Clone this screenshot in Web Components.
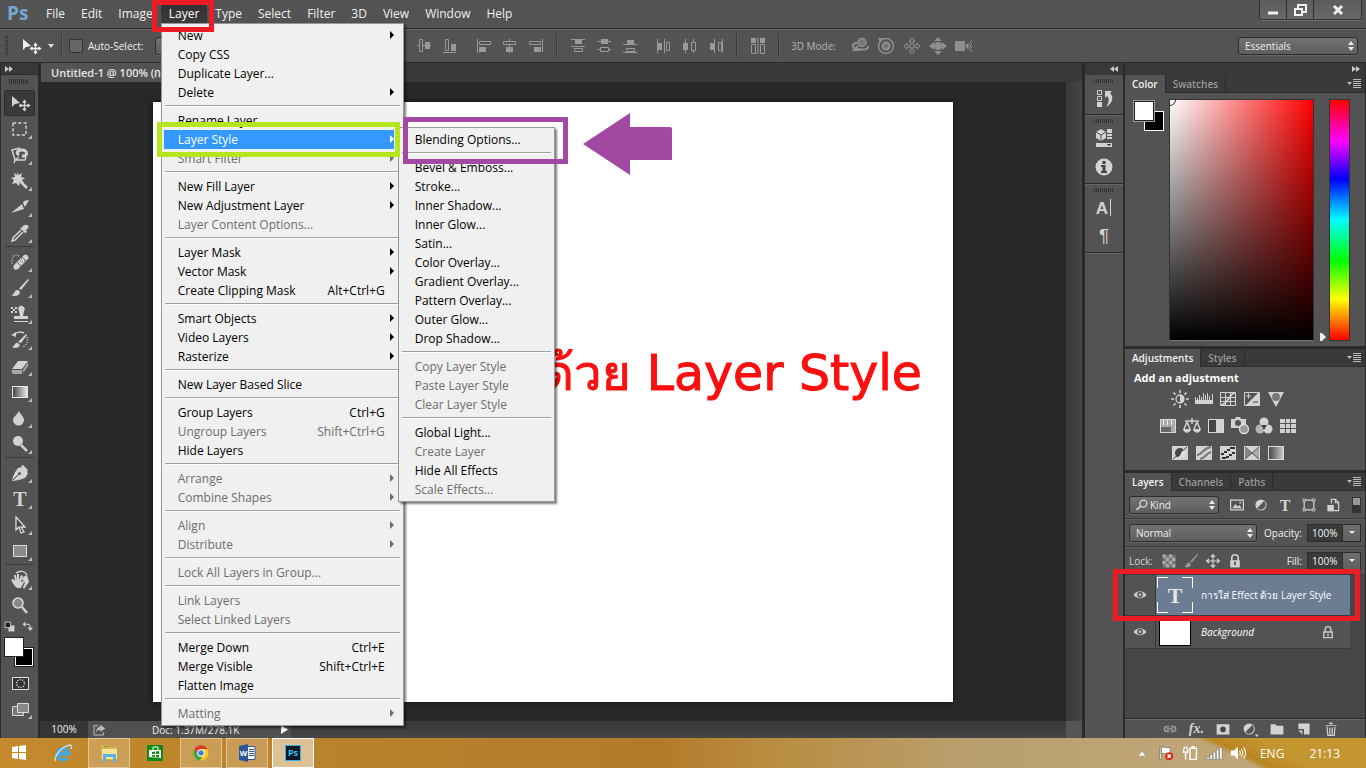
<!DOCTYPE html>
<html lang="en">
<head>
<meta charset="utf-8">
<meta name="viewport" content="width=device-width, initial-scale=1">
<title>Untitled-1</title>
<style>
    html, body {
        margin: 0;
        height: 100%;
    }

    body {
        background: #282828;
        color: #e6e6e6;
        font-family: "Open Sans", "Noto Sans", "DejaVu Sans", sans-serif;
        font-size: 10px;
        overflow: hidden;
    }
</style>
</head>
<body>
<ps-desktop>
    <ps-menubar slot="menubar"></ps-menubar>
    <ps-options-bar slot="options"></ps-options-bar>
    <ps-toolbox slot="work"></ps-toolbox>
    <ps-document slot="work"></ps-document>
    <ps-dock slot="work"></ps-dock>
    <ps-taskbar slot="taskbar"></ps-taskbar>
</ps-desktop>

<script>
// Icon artwork, drawn on a 20x20 grid
const ALIGN = {
    // one filled box and one outlined box around a horizontal guide
    mid: '<path d="M3 9.5h14"/><path d="M5.5 3.5h3v12h-3z" fill="#535353"/><path class="f" d="M11 6h5v7h-5z"/>',
    end: '<path d="M3 16.500h13M5.500 3.500h3v11h-3z"/><path class="f" d="M11 8h5v7h-5z"/>',
    start: '<path d="M3 3.500h14M5.500 5.500h3v11h-3z"/><path class="f" d="M11 5h5v7h-5z"/>',
    dTop: '<path d="M3 3.500h14M3 10.500h14M6.500 12.500h8v3h-8z"/><path class="f" d="M7 4h7v4H7z"/>',
    dMid: '<path d="M3 5.500h14M3 13.500h14"/><path class="f" d="M7 3h7v5H7z"/><path d="M6.500 11.500h8v4h-8z" fill="#535353"/>',
    dEnd: '<path d="M3 8.500h14M3 16.500h14M6.500 12.500h8v3h-8z"/><path class="f" d="M7 4h7v4H7z"/>'
};
const flip = (art) => `<g transform="matrix(0 1 1 0 0 0)">${art}</g>`;
const line = (art) => `<g class="s">${art}</g>`;

const ICONS = {
    alignMid: line(ALIGN.mid),
    alignEnd: line(ALIGN.end),
    alignLeft: line(flip(ALIGN.start)),
    alignCenter: line(flip(ALIGN.mid)),
    alignRight: line(flip(ALIGN.end)),
    distTop: line(ALIGN.dTop),
    distMid: line(ALIGN.dMid),
    distEnd: line(ALIGN.dEnd),
    distLeft: line(flip(ALIGN.dTop)),
    distCenter: line(flip(ALIGN.dMid)),
    distRight: line(flip(ALIGN.dEnd)),
    autoAlign: line('<path class="f" d="M3 2h5v5H3zM12 2h5v5h-5z"/><path d="M3.500 8.500h4v9h-4zM12.500 8.500h4v9h-4zM10 2v16"/>'),
    roll3d: '<circle cx="12" cy="6.500" r="4" fill="#777" stroke="currentColor" stroke-width="1.500"/><path class="l" stroke-width="2" d="M7 7C2 7 1 12 7 13c6 1 12 1 11-3M8 10l-4 4h6"/>',
    orbit3d: '<circle cx="10" cy="10" r="7.500" class="l" stroke-width="1.500"/><circle cx="10" cy="10" r="4.500"/><circle cx="10" cy="10" r="2.500" fill="#777"/><path d="M2 2l6 0-4 5z"/>',
    pan3d: '<path class="l" d="M10 2l3 3h-2v4h4V7l3 3-3 3v-2h-4v4h2l-3 3-3-3h2v-4H5v2l-3-3 3-3v2h4V5H7z"/>',
    slide3d: '<circle cx="10" cy="10" r="4"/><path d="M10 1l4 4H6zM10 19l4-4H6zM1 10l5-4v8zM19 10l-5-4v8z"/>',
    zoom3d: '<path d="M1 5h10v10H1zM11 10l3-3v6z"/><path class="l" d="M18 4l-4 6 4 6M18 8l-2 2 2 2"/>',

    move: '<path d="M2 3v11l3-3 5-1z"/><path class="l" stroke-width="1.300" d="M14.500 8v9M10 12.500h9M13 9.500l1.500-2 1.500 2M13 15.500l1.500 2 1.500-2M11.500 11l-2 1.500 2 1.500M17.500 11l2 1.500-2 1.500"/>',
    marquee: '<rect x="3" y="4" width="13" height="12" class="l" stroke-width="1.500" stroke-dasharray="3.200 2"/>',
    lasso: '<path class="l" stroke-width="1.500" d="M10 3L2 5l3 10 4-3M5 15l10 0 1-3M5 15l-1 3"/><path class="l" stroke-width="3" d="M9 10c-3-2-2-5 3-5 6 0 6 7 0 6"/>',
    wand: '<path d="M7 1l1.500 3L12 2l-1 4 4 1-3 2 2 3-4-1-1 4-3-3-4 1 2-4-3-2 4-1-1-4 3 2z"/><path class="l" stroke-width="2.500" d="M11 11l6 6"/>',
    slice: '<path d="M1 16L12 7l2 5z"/><path d="M13 6l1-2 5-1-4 7z"/>',
    dropper: '<path d="M11 6c0-1 3-5 6-4s1 4-1 5l1 2-2 1-5-5 1-1z"/><path class="l" stroke-width="1.500" d="M11 7l-8 8-1 3 3-1 8-8"/>',
    heal: '<path d="M4 13L14 3c2-2 6 2 4 4L8 17c-3 2-6-1-4-4z"/><path stroke="#666" stroke-width="1" d="M7 10l4 4M12 5l4 4M10 9h1M12 10h1M11 7h1M14 9h1"/><path class="l" stroke-width="1.300" stroke-dasharray="1 1.500" d="M9 4c-5-3-9 3-6 9"/>',
    brush: '<path d="M18 1l1 1-8 10-2-1.500z"/><path d="M1 17c4 0 3-6 7-5l2 2c0 4-6 5-9 3z"/>',
    stamp: '<path d="M12 2a3 3 0 0 1 2 5l-1 5h5v3H4v-3h6l-1-5a3 3 0 0 1 3-5zM4 17h14v1H4zM1 3h2v2H1zM5 3h2v2H5zM3 5h2v2H3zM1 7h2v2H1zM5 7h2v2H5z"/>',
    history: '<path d="M16 4l1 1-6 8-3-1zM2 17c3-1 3-5 6-4l2 2c-1 3-5 4-8 2zM1 5l5-3v5z"/><path class="l" stroke-width="1.500" d="M4 5c3-4 8-3 10-2"/><path class="l" stroke-width="1.500" stroke-dasharray="1 1.500" d="M17 7c2 5-2 10-5 10"/>',
    eraser: '<path d="M2 13l6-8h10l-6 8z"/><path d="M2 14h10v4H4c-2 0-3-2-2-4zM13 14l5-8v4l-5 7z" fill="#a8a8a8"/>',
    gradient: '<linearGradient id="g"><stop stop-color="#444"/><stop offset="1" stop-color="#eee"/></linearGradient><rect x="2.500" y="4.500" width="15" height="11" fill="url(#g)" stroke="#e6e6e6"/>',
    blur: '<path d="M9 3c2 4 5 6 5 9a5 5 0 0 1-11 0c0-3 4-5 6-9z"/>',
    dodge: '<circle cx="8" cy="7" r="5"/><path class="l" stroke-width="2.500" d="M11 11l6 6"/>',
    pen: '<path d="M12 4l6 6-2 4c-4 3-8 3-14 4 1-6 3-9 6-13zM13 2l5 5-1 2-6-6z"/><path stroke="#444" d="M3 17l6-6"/><circle cx="9.500" cy="10.500" r="1.300" fill="#444"/>',
    type: '<text x="10" y="17" text-anchor="middle" font-family="Liberation Serif, serif" font-weight="bold" font-size="20">T</text>',
    arrow: '<path d="M6 2v13l3-3 2 6 3-1-3-5h4z" fill="#444" stroke="#dcdcdc" stroke-width="1.300"/>',
    shape: '<rect x="3.500" y="4.500" width="13" height="11" fill="#8c8c8c" stroke="#dcdcdc"/>',
    hand: '<path d="M7 18c-3-2-4-5-6-8l2-1 2 2-1-6h2l1 5V4h2v6l2-5 2 1-2 6 3-1c0 3-3 5-3 7z"/><path d="M13 7l4-2 2 7-5 7-1-2 2-4-3-4z"/><path class="l" stroke-width="1.500" d="M6 3c4-3 9-2 11 2"/>',
    zoom: '<circle cx="8" cy="7" r="5" fill="#888" stroke="#dcdcdc" stroke-width="1.500"/><path class="l" stroke-width="2.500" d="M12 11l5 6"/>',
    mask: '<path fill="#333" stroke="#e0e0e0" d="M2.500 4.500h16v12h-16z"/><circle cx="10.500" cy="10.500" r="4" class="l" stroke-width="1.500" stroke-dasharray="1.200 1.300"/>',
    screens: '<path fill="#777" stroke="#dcdcdc" d="M2.500 7.500h11v9h-11z"/><path fill="#888" stroke="#dcdcdc" d="M7.500 4.500h11v9h-11z"/>',
    swap: '<path class="l" stroke-width="2" d="M4 6h6q5 0 5 6"/><path d="M6 1v10L1 6zM10 12h10l-5 6z"/>',
    defaults: '<path d="M8 8h11v11H8z"/><path fill="#222" stroke="#dcdcdc" stroke-width="1.500" d="M2 2h10v10H2z"/>',

    actions: '<path class="l" d="M3.500 2.500h4v4h-4zM3.500 8.500h4v4h-4z"/><path d="M3 14h5v5H3zM11 3h7l-2 2c4 4 3 10-4 14 4-6 3-9 1-11l-2 2z"/>',
    props: '<path d="M7 1l5 3v6l-5 3-5-3V4zM13 1h5v4h-5zM13 6h5v2h-5zM13 9h5v2h-5zM2 15h16v4H2z"/><path fill="none" stroke="#555" d="M2 4l5 3 5-3M7 7v6"/><path fill="#222" d="M13 16h4l-2 2z"/>',
    info: '<circle cx="10" cy="10" r="8.500"/><path fill="#444" d="M8.500 4h3v3h-3zM7 8h4.500v6H13v2H7v-2h1.500v-4H7z"/>',
    char: '<text x="8" y="17" text-anchor="middle" font-family="Liberation Sans, sans-serif" font-weight="bold" font-size="17">A</text><path d="M16 2h1v17h-1z"/>',
    para: '<text x="10" y="16" text-anchor="middle" font-family="Liberation Sans, sans-serif" font-size="19">¶</text>',

    bright: '<circle cx="10" cy="10" r="4" class="l" stroke-width="1.300"/><path d="M10 6a4 4 0 0 1 0 8z"/><path class="l" stroke-width="1.700" d="M10 1v3M10 16v3M1 10h3M16 10h3M3.500 3.500l2 2M14.500 14.500l2 2M16.500 3.500l-2 2M3.500 16.500l2-2"/>',
    levels: '<path d="M1 11h18v4H1z"/><path class="l" d="M1.500 8v4M3.500 9v3M5.500 6v6M7.500 8v4M9.500 4v8M11.500 6v6M13.500 4v8M15.500 7v5M18.500 5v7"/>',
    curves: '<path class="l" d="M2.500 3.500h15v13h-15zM7.500 4v12M12.500 4v12M3 8.500h14M3 12.500h14"/><path class="l" stroke-width="1.700" d="M3 16c8-1 7-11 14-12"/>',
    exposure: '<path class="l" d="M2.500 3.500h15v13h-15z"/><path d="M17 3v14H3z"/><path class="l" d="M4 7h5M6.500 4.500v5"/><path stroke="#444" d="M11 13h5"/>',
    vibrance: '<path d="M2 3h16l-8 15z"/><circle cx="10" cy="8" r="4" fill="#777"/>',
    hue: '<path fill="#aaa" stroke="#dcdcdc" d="M2.500 3.500h15v13h-15z"/><path stroke="#eee" d="M5.500 4v5M9.500 4v5M13.500 4v5"/><path fill="#666" d="M3 11h10v5H3z"/>',
    balance: '<path class="l" stroke-width="1.500" d="M10 2v6M3 5h14M5 6l-3 7M5 6l3 7M15 6l-3 7M15 6l3 7"/><path d="M1 13h8c-1 5-7 5-8 0zM11 13h8c-1 5-7 5-8 0z"/>',
    bw: '<path fill="#444" stroke="#dcdcdc" d="M2.500 3.500h15v13h-15z"/><path d="M10 4h7v12h-7z"/>',
    photo: '<path d="M1 3h4l1-2h4l1 2h5v9H1z"/><circle cx="8" cy="7" r="3" fill="#555"/><circle cx="14" cy="13" r="4.500" fill="#999" stroke="#dcdcdc" stroke-width="1.300"/>',
    mixer: '<circle cx="10" cy="6" r="4.500"/><circle cx="6" cy="13" r="4.500" fill="#b4b4b4"/><circle cx="14" cy="13" r="4.500"/><path fill="#444" d="M7 9h6l-3 5z"/>',
    lookup: '<path d="M2 3h16v14H2z"/><path stroke="#555" d="M2 7.500h16M2 12.500h16M7.500 3v14M12.500 3v14"/>',
    invert: '<path d="M2 3h16v14H2z"/><circle cx="10" cy="10" r="5" fill="#444"/><path fill="#ddd" d="M14 6a5 5 0 0 1-7 8c5 0 3-7 7-8z"/><path stroke="#444" d="M3 16L17 4"/>',
    poster: '<path d="M2 3h16v14H2z"/><path stroke="#777" fill="none" stroke-width="2" d="M3 12c5 0 6-7 14-8M6 16c6-1 6-6 11-7"/>',
    thresh: '<path d="M2 3h16v14H2z"/><path fill="#333" d="M3 12h3v-2h3V8h3V6h5V4h-5v2H9v2H6v2H3zM4 16h4v-1h3v-2h3v-2h3v-2h-3v2h-3v2H8v1H4z"/>',
    selective: '<path d="M2 3h16v14H2z"/><path fill="#888" d="M3 4l7 6-7 6z"/><path fill="#aaa" d="M17 4l-7 6 7 6z"/><path stroke="#555" d="M3 4l14 12M17 4L3 16"/>',
    gradmap: '<linearGradient id="m"><stop stop-color="#444"/><stop offset="1" stop-color="#ccc"/></linearGradient><rect x="2.500" y="3.500" width="15" height="13" fill="url(#m)" stroke="#dcdcdc"/>',

    search: '<circle cx="12" cy="8" r="5" class="l" stroke-width="2"/><path class="l" stroke-width="2.500" d="M8 12l-6 5"/>',
    image: '<path class="l" stroke-width="1.500" d="M2 4h16v12H2z"/><path d="M4 14l4-5 3 3 2-2 3 4zM13 6h2v2h-2z"/>',
    adjust: '<circle cx="10" cy="10" r="7"/><path fill="#555" d="M14 5L5 14a6 6 0 0 0 9-9z"/>',
    bounds: '<path class="l" stroke-width="1.500" d="M4 4h12v12H4z"/><path fill="#555" stroke="#dcdcdc" d="M2.500 2.500h3v3h-3zM14.500 2.500h3v3h-3zM2.500 14.500h3v3h-3zM14.500 14.500h3v3h-3z"/>',
    smart: '<path class="l" stroke-width="1.500" d="M8 8V3h5l4 4v10h-6M13 3v4h4"/><path d="M3 10h8v8H3z"/>',
    checker: '<path fill="#777" d="M2 2h16v16H2z"/><path fill="#aaa" d="M2 2h4v4H2zM10 2h4v4h-4zM6 6h4v4H6zM14 6h4v4h-4zM2 10h4v4H2zM10 10h4v4h-4zM6 14h4v4H6zM14 14h4v4h-4z"/>',
    cross: '<path class="l" stroke-width="1.500" d="M10 2v16M2 10h16M7.500 5L10 2l2.500 3M7.500 15l2.500 3 2.500-3M5 7.500L2 10l3 2.500M15 7.500l3 2.500-3 2.500"/>',
    lock: '<path d="M4 9h12v9H4z"/><path class="l" stroke-width="2" d="M6 9V6c0-5 8-5 8 0v3"/><path fill="#444" d="M9 11h2v4H9z"/>',
    lockOutline: '<path class="l" stroke-width="2" d="M4 10h12v8H4zM6 9V6c0-5 8-5 8 0v3"/><path d="M9 12h2v4H9z"/>',
    eye: '<path d="M1 10c4-7 14-7 18 0-4 6-14 6-18 0z"/><circle cx="10" cy="9.500" r="4" fill="#535353"/><circle cx="10" cy="9.500" r="2" fill="#bbb"/>',
    link: '<path class="l" stroke-width="2" d="M9 7H6a3 3 0 0 0 0 6h3M11 7h3a3 3 0 0 1 0 6h-3M6 10h8"/>',
    layerMask: '<path d="M2 4h16v13H2z"/><circle cx="10" cy="10.500" r="3.500" fill="#444"/>',
    adjustMore: '<circle cx="9" cy="10" r="7"/><path fill="#555" d="M13 5L4 14a6 6 0 0 0 9-9z"/><path d="M16 17h5l-2.500 3z"/>',
    folder: '<path d="M2 4h6l2 2h8v11H2z"/>',
    page: '<path d="M3 3h14v14h-7v-7H3z"/><path d="M3 12h5v5z"/>',
    trash: '<path d="M3 5h14v1H3zM8 2h4v2H8z"/><path class="l" stroke-width="1.500" d="M5 7l1 11h8l1-11M8.500 8v9M11.500 8v9"/>',
    share: '<path class="l" stroke-width="1.500" d="M9 4H3v13h13v-4"/><path d="M12 2l7 6-7 5v-3c-4 0-5 1-6 4 0-6 2-8 6-9z"/>',

    windows: '<path fill="#fff" d="M3 4l6-1v6H3zM10 3l7-1v7h-7zM3 10h6v6l-6-1zM10 10h7v7l-7-1z"/>',
    ie: '<path fill="none" stroke="#3fa9e4" stroke-width="3.500" d="M4 11h11.500a5.500 5.500 0 1 0-1.500 4"/><path fill="none" stroke="#bfe6f8" stroke-width="1.300" d="M3 18C-1 15 9 3 17 2c2 0 2 2 1 4"/>',
    explorer: '<path fill="#d9b64a" d="M2 2h7l1 2h8v13H2z"/><path fill="#f6e39a" d="M3 6h15v10H3z"/><path fill="#5bb1e6" d="M4 11h13v8h-3v-5H7v5H4z"/><path fill="#52a544" d="M5 3h4v1H5z"/>',
    store: '<path fill="#108a16" d="M2 2h16v16H2z"/><path fill="#fff" d="M4 7h12v8l-12-1z"/><path fill="none" stroke="#fff" d="M8 7V4h5v3"/><path fill="#108a16" d="M7 9l3-.5V11H7zM11 8.500l3-.5v3h-3zM7 12h3v2l-3-.5zM11 12h3v2.500l-3-.5z"/>',
    chrome: '<circle cx="10" cy="10" r="7.500" fill="#fbc917"/><path fill="#de3a2d" d="M3.500 6a7.500 7.500 0 0 1 13 0H10l-4 5z"/><path fill="#3fa648" d="M3.500 6l3.500 6 4 2-2 3.500A7.500 7.500 0 0 1 3.500 6z"/><circle cx="10" cy="10" r="3.700" fill="#fff"/><circle cx="10" cy="10" r="2.700" fill="#3f7fd8"/>',
    word: '<path fill="#fff" stroke="#2b579a" d="M10 3.500h8v13h-8z"/><path stroke="#2b579a" d="M12 6.500h5M12 8.500h5M12 10.500h5M12 12.500h5"/><path fill="#2b579a" d="M2 3l9-2v18l-9-2z"/><text x="6.500" y="13" text-anchor="middle" font-family="Liberation Sans, sans-serif" font-weight="bold" font-size="8" fill="#fff">W</text>',
    flag: '<path fill="#fff" stroke="#554" stroke-width=".7" d="M2 2h2v16H2zM4 3c4-2 6 2 11 0v8c-5 2-7-2-11 0z"/><circle cx="14" cy="14" r="5" fill="#d8271c"/><path stroke="#fff" stroke-width="1.800" d="M12 12l4 4M16 12l-4 4"/>',
    battery: '<path fill="none" stroke="#fff" stroke-width="1.800" d="M10 4h8v14h-8zM12 2h4M2 5v4h5V5M3 2v3M6 2v3M4.500 9v9"/>',
    signal: '<path fill="#fff" stroke="#665" stroke-width=".6" d="M1 15h3v3H1zM5 12h3v6H5zM9 9h3v9H9zM13 6h3v12h-3zM17 3h3v15h-3z"/>',
    speaker: '<path fill="#fff" d="M1 7h4l5-5v16l-5-5H1z"/><path fill="none" stroke="#fff" stroke-width="1.400" d="M12 7q2 3 0 6M14 5q4 5 0 10M17 3q5 7 0 14"/>'
};

// Shared base: sets the class's markup and styles in an open shadow root
class PsElement extends HTMLElement {
    constructor() {
        super();
        this.attachShadow({ mode: 'open' });
        this.render();
    }

    render() {
        this.shadowRoot.innerHTML = `
            <style>
                *, *::before, *::after { box-sizing: border-box; }
                button, input, select { font: inherit; color: inherit; margin: 0; padding: 0; border: 0; background: none; }
                ${this.css()}
            </style>
            ${this.html()}
        `;
    }

    css() { return ''; }
    html() { return '<slot></slot>'; }
}

class PsIcon extends PsElement {
    connectedCallback() { this.render(); }
    css() {
        return `
            :host { display: inline-flex; flex: none; width: var(--icon, 20px); height: var(--icon, 20px); }
            svg { width: 100%; height: 100%; fill: currentColor; overflow: visible; }
            .l { fill: none; stroke: currentColor; }
            .s { fill: none; stroke: currentColor; }
            .s .f { fill: currentColor; stroke: none; }
        `;
    }
    html() {
        return `<svg viewBox="0 0 20 20" aria-hidden="true">${ICONS[this.getAttribute('name')] || ''}</svg>`;
    }
}
customElements.define('ps-icon', PsIcon);

// Styled native drop-down
class PsSelect extends PsElement {
    connectedCallback() { this.render(); }
    css() {
        return `
            :host { display: flex; align-items: center; position: relative; height: 18px; border: 1px solid #2c2c2c; border-radius: 3px; background: linear-gradient(#727272, #5e5e5e); box-shadow: 0 1px 0 #646464; }
            select { flex: 1; min-width: 0; height: 100%; padding-left: var(--indent, 6px); appearance: none; color: #f0f0f0; }
            svg { flex: none; width: 6px; height: 10px; margin-right: 3px; fill: #e8e8e8; }
            ps-icon { --icon: 14px; position: absolute; left: 5px; }
        `;
    }
    html() {
        const icon = this.getAttribute('icon');
        return `
            ${icon ? `<ps-icon name="${icon}"></ps-icon>` : ''}
            <select aria-label="${this.getAttribute('label') || ''}"><option>${this.getAttribute('value') || ''}</option></select>
            <svg viewBox="0 0 6 10"><path d="M3 0l3 4H0zM3 10l3-4H0z"/></svg>
        `;
    }
}
customElements.define('ps-select', PsSelect);

/* ---------- Menus ---------- */

// Coloured frame laid around whatever it is placed in
class PsCallout extends PsElement {
    css() {
        return `:host { display: block; position: absolute; z-index: 5; border: 5px solid var(--mark, #ed1c24); pointer-events: none; }`;
    }
}
customElements.define('ps-callout', PsCallout);

class PsMenu extends PsElement {
    css() {
        return `
            :host { display: block; padding: 2px 0; background: #f0f0f0; border: 1px solid #979797; box-shadow: 2px 2px 2px rgba(0, 0, 0, .5); color: #000; font-size: 12px; }
            ::slotted(hr) { height: 2px; margin: 3px 3px 4px; border: 0; border-top: 1px solid #a0a0a0; background: #fff; }
        `;
    }
}
customElements.define('ps-menu', PsMenu);

class PsMenuItem extends PsElement {
    connectedCallback() { this.render(); }
    css() {
        return `
            :host { display: block; position: relative; }
            :host([off]) { color: #6d6d6d; }
            :host([on]) button { background: #3399ff; color: #fff; }
            button { display: flex; align-items: center; justify-content: space-between; width: calc(100% - 11px); height: 19px; margin-left: 2px; padding: 1px 0 0 14px; line-height: 16px; text-align: left; white-space: nowrap; }
            kbd { font: inherit; margin-right: 9px; }
            svg { width: 4px; height: 8px; margin: 0 0 2px; fill: currentColor; }
        `;
    }
    html() {
        const keys = this.getAttribute('keys');
        return `
            <button type="button" ${this.hasAttribute('off') ? 'disabled style="color:inherit"' : ''}>
                <span><slot></slot></span>
                ${keys ? `<kbd>${keys}</kbd>` : ''}
                ${this.hasAttribute('more') ? '<svg viewBox="0 0 4 8"><path d="M0 0l4 4-4 4z"/></svg>' : ''}
            </button>
            <slot name="over"></slot>
        `;
    }
}
customElements.define('ps-menu-item', PsMenuItem);

class PsMenubar extends PsElement {
    css() {
        return `
            :host { display: flex; align-items: flex-start; position: relative; z-index: 10; height: 28px; background: #535353; color: #f0f0f0; font-size: 12px; }
            .logo { width: 38px; padding-left: 7px; font: bold 19px/26px "Open Sans", sans-serif; color: #76a5d8; }
            nav { display: flex; flex: 1; padding-top: 4px; }
            .entry { position: relative; }
            .entry > button { height: 19px; padding: 0 8px; line-height: 19px; }
            .entry.open > button { background: linear-gradient(#303030, #3c3c3c); border-radius: 3px 3px 0 0; color: #fff; }
            .entry > ps-menu { position: absolute; top: 100%; left: 0; width: 243px; }
            .mark-menu { inset: -4px -7px -9px -9px; }
            .mark-style { inset: -8px 3px -8px -5px; --mark: #b5e61d; }
            .mark-blend { inset: -13px -14px -15px 4px; --mark: #a349a4; }
            .submenu { position: absolute; left: 236px; top: -3px; width: 157px; z-index: 4; }
            .arrow { position: absolute; left: 184px; top: -17px; width: 90px; height: 62px; fill: #a349a4; z-index: 6; }
            .window { display: flex; height: 20px; margin-right: 4px; border: 1px solid #303030; border-top: 0; border-radius: 0 0 3px 3px; background: linear-gradient(#5c5c5c, #686868); box-shadow: 0 1px 0 #707070; }
            .window button { width: 27px; display: flex; align-items: center; justify-content: center; border-right: 1px solid #303030; }
            .window button:last-child { width: 47px; border: 0; }
            .window svg { width: 14px; height: 12px; fill: none; stroke: #f0f0f0; stroke-width: 2; }
        `;
    }
    html() {
        const entry = (name) => `<div class="entry"><button type="button">${name}</button></div>`;
        return `
            <div class="logo">Ps</div>
            <nav>
                ${['File', 'Edit', 'Image'].map(entry).join('')}
                <div class="entry open">
                    <button type="button">Layer</button>
                    <ps-menu>
                        <ps-menu-item more>New</ps-menu-item>
                        <ps-menu-item>Copy CSS</ps-menu-item>
                        <ps-menu-item>Duplicate Layer...</ps-menu-item>
                        <ps-menu-item more>Delete</ps-menu-item>
                        <hr>
                        <ps-menu-item>Rename Layer...</ps-menu-item>
                        <ps-menu-item more on>Layer Style
                            <ps-callout slot="over" class="mark-style"></ps-callout>
                            <ps-menu slot="over" class="submenu">
                                <ps-menu-item>Blending Options...
                                    <ps-callout slot="over" class="mark-blend"></ps-callout>
                                    <svg slot="over" class="arrow" viewBox="0 0 90 62"><path d="M0 31L47 0v14h40q2 0 2 2v31H47v15z"/></svg>
                                </ps-menu-item>
                                <hr>
                                <ps-menu-item>Bevel &amp; Emboss...</ps-menu-item>
                                <ps-menu-item>Stroke...</ps-menu-item>
                                <ps-menu-item>Inner Shadow...</ps-menu-item>
                                <ps-menu-item>Inner Glow...</ps-menu-item>
                                <ps-menu-item>Satin...</ps-menu-item>
                                <ps-menu-item>Color Overlay...</ps-menu-item>
                                <ps-menu-item>Gradient Overlay...</ps-menu-item>
                                <ps-menu-item>Pattern Overlay...</ps-menu-item>
                                <ps-menu-item>Outer Glow...</ps-menu-item>
                                <ps-menu-item>Drop Shadow...</ps-menu-item>
                                <hr>
                                <ps-menu-item off>Copy Layer Style</ps-menu-item>
                                <ps-menu-item off>Paste Layer Style</ps-menu-item>
                                <ps-menu-item off>Clear Layer Style</ps-menu-item>
                                <hr>
                                <ps-menu-item>Global Light...</ps-menu-item>
                                <ps-menu-item off>Create Layer</ps-menu-item>
                                <ps-menu-item>Hide All Effects</ps-menu-item>
                                <ps-menu-item off>Scale Effects...</ps-menu-item>
                            </ps-menu>
                        </ps-menu-item>
                        <ps-menu-item more off>Smart Filter</ps-menu-item>
                        <hr>
                        <ps-menu-item more>New Fill Layer</ps-menu-item>
                        <ps-menu-item more>New Adjustment Layer</ps-menu-item>
                        <ps-menu-item off>Layer Content Options...</ps-menu-item>
                        <hr>
                        <ps-menu-item more>Layer Mask</ps-menu-item>
                        <ps-menu-item more>Vector Mask</ps-menu-item>
                        <ps-menu-item keys="Alt+Ctrl+G">Create Clipping Mask</ps-menu-item>
                        <hr>
                        <ps-menu-item more>Smart Objects</ps-menu-item>
                        <ps-menu-item more>Video Layers</ps-menu-item>
                        <ps-menu-item more>Rasterize</ps-menu-item>
                        <hr>
                        <ps-menu-item>New Layer Based Slice</ps-menu-item>
                        <hr>
                        <ps-menu-item keys="Ctrl+G">Group Layers</ps-menu-item>
                        <ps-menu-item off keys="Shift+Ctrl+G">Ungroup Layers</ps-menu-item>
                        <ps-menu-item>Hide Layers</ps-menu-item>
                        <hr>
                        <ps-menu-item more off>Arrange</ps-menu-item>
                        <ps-menu-item more off>Combine Shapes</ps-menu-item>
                        <hr>
                        <ps-menu-item more off>Align</ps-menu-item>
                        <ps-menu-item more off>Distribute</ps-menu-item>
                        <hr>
                        <ps-menu-item off>Lock All Layers in Group...</ps-menu-item>
                        <hr>
                        <ps-menu-item off>Link Layers</ps-menu-item>
                        <ps-menu-item off>Select Linked Layers</ps-menu-item>
                        <hr>
                        <ps-menu-item keys="Ctrl+E">Merge Down</ps-menu-item>
                        <ps-menu-item keys="Shift+Ctrl+E">Merge Visible</ps-menu-item>
                        <ps-menu-item>Flatten Image</ps-menu-item>
                        <hr>
                        <ps-menu-item more off>Matting</ps-menu-item>
                    </ps-menu>
                    <ps-callout class="mark-menu"></ps-callout>
                </div>
                ${['Type', 'Select', 'Filter', '3D', 'View', 'Window', 'Help'].map(entry).join('')}
            </nav>
            <div class="window">
                <button type="button" aria-label="Minimize"><svg viewBox="0 0 14 12"><path d="M2 9h10" stroke-width="3"/></svg></button>
                <button type="button" aria-label="Restore"><svg viewBox="0 0 14 12"><path d="M5 4V1h8v7h-3M2 5h7v6H2z"/></svg></button>
                <button type="button" aria-label="Close"><svg viewBox="0 0 14 12"><path d="M3 2l8 8M11 2l-8 8" stroke-width="3"/></svg></button>
            </div>
        `;
    }
}
customElements.define('ps-menubar', PsMenubar);

class PsOptionsBar extends PsElement {
    css() {
        return `
            :host { display: flex; align-items: center; height: 33px; padding-right: 8px; background: #535353; border-top: 1px solid #2b2b2b; border-bottom: 1px solid #2b2b2b; box-shadow: inset 0 1px 0 #666; color: #f0f0f0; }
            .left { display: flex; align-items: center; flex: 0 0 414px; gap: 4px; }
            .grip { width: 3px; height: 20px; margin: 0 9px 0 5px; background: repeating-linear-gradient(#333 0 1px, #535353 1px 2px); }
            .caret { width: 6px; height: 4px; margin: 0 3px 0 3px; fill: #ddd; }
            .sep { width: 1px; height: 23px; background: #3a3a3a; box-shadow: 1px 0 0 #5f5f5f; }
            label { display: flex; align-items: center; gap: 5px; margin: 0 8px 0 3px; }
            input { appearance: none; width: 14px; height: 14px; background: #666; border: 1px solid #333; border-radius: 2px; }
            .left ps-select { width: 64px; }
            .set { display: flex; gap: 6px; color: #999; padding-right: 10px; }
            .near { margin-right: 4px; }
            .sep + .set { padding-left: 11px; }
            .mode { flex: 1; margin-left: 12px; display: flex; align-items: center; gap: 14px; color: #b4b4b4; }
            .mode .set { color: #8f8f8f; }
            .essentials { width: 120px; }
        `;
    }
    html() {
        const icons = (list) => list.map((n) => `<ps-icon name="${n}"></ps-icon>`).join('');
        return `
            <div class="left">
                <span class="grip"></span>
                <ps-icon name="move"></ps-icon>
                <svg class="caret" viewBox="0 0 6 4"><path d="M0 0h6L3 4z"/></svg>
                <span class="sep"></span>
                <label><input type="checkbox">Auto-Select:</label>
                <ps-select label="Auto-select target" value=""></ps-select>
            </div>
            <div class="set near">${icons(['alignMid', 'alignEnd'])}</div>
            <div class="set">${icons(['alignLeft', 'alignCenter', 'alignRight'])}</div>
            <span class="sep"></span>
            <div class="set near">${icons(['distTop', 'distMid', 'distEnd'])}</div>
            <div class="set">${icons(['distLeft', 'distCenter', 'distRight'])}</div>
            <span class="sep"></span>
            <div class="set">${icons(['autoAlign'])}</div>
            <span class="sep"></span>
            <div class="mode">
                <span>3D Mode:</span>
                <div class="set">${icons(['roll3d', 'orbit3d', 'pan3d', 'slide3d', 'zoom3d'])}</div>
            </div>
            <ps-select class="essentials" label="Workspace" value="Essentials"></ps-select>
        `;
    }
}
customElements.define('ps-options-bar', PsOptionsBar);

class PsToolbox extends PsElement {
    css() {
        return `
            :host { display: flex; flex-direction: column; flex: none; width: 37px; background: #535353; border: solid #2b2b2b; border-width: 0 1px; color: #d2d2d2; }
            header { height: 12px; background: #383838; border-bottom: 1px solid #2b2b2b; display: flex; align-items: center; padding-left: 4px; }
            header svg { width: 8px; height: 6px; fill: #ccc; }
            .grip { flex: none; width: 20px; height: 5px; margin: 4px 0 6px 8px; background: repeating-linear-gradient(90deg, #333 0 1px, #535353 1px 2px); }
            button { display: flex; align-items: center; justify-content: center; position: relative; width: 31px; height: 26px; margin-left: 3px; }
            button.more::after { content: ""; position: absolute; right: 3px; bottom: 3px; border: 2px solid transparent; border-right-color: #bbb; border-bottom-color: #bbb; }
            button.on { background: #3a3a3a; border: 1px solid #2c2c2c; border-radius: 2px; }
            hr { flex: none; width: 29px; height: 3px; margin: 0 0 0 4px; border: 0; border-top: 1px solid #3a3a3a; }
            .mini { display: flex; gap: 7px; padding: 2px 0 0 3px; height: 18px; --icon: 11px; }
            .colors { display: grid; grid-template-columns: repeat(3, 10px); grid-template-rows: repeat(3, 10px); margin: 0 0 3px 3px; }
            .colors i { border: 1px solid #222; }
            .fg { grid-area: 1 / 1 / 3 / 3; background: #fff; z-index: 1; }
            .bg { grid-area: 2 / 2 / 4 / 4; background: #000; box-shadow: inset 0 0 0 1px #fff; }
        `;
    }
    html() {
        const tool = (n) => `<button type="button" class="${n === 'move' ? 'on' : n === 'zoom' ? '' : 'more'}" aria-label="${n}"><ps-icon name="${n}"></ps-icon></button>`;
        return `
            <header><svg viewBox="0 0 8 6"><path d="M0 0l4 3-4 3zM4 0l4 3-4 3z"/></svg></header>
            <span class="grip"></span>
            ${['move', 'marquee', 'lasso', 'wand', 'slice', 'dropper'].map(tool).join('')}
            <hr>
            ${['heal', 'brush', 'stamp', 'history', 'eraser', 'gradient', 'blur', 'dodge'].map(tool).join('')}
            <hr>
            ${['pen', 'type', 'arrow', 'shape'].map(tool).join('')}
            <hr>
            ${['hand', 'zoom'].map(tool).join('')}
            <div class="mini"><ps-icon name="defaults"></ps-icon><ps-icon name="swap"></ps-icon></div>
            <div class="colors"><i class="fg"></i><i class="bg"></i></div>
            <button type="button" aria-label="Quick mask"><ps-icon name="mask"></ps-icon></button>
            ${tool('screens')}
        `;
    }
}
customElements.define('ps-toolbox', PsToolbox);

class PsDocument extends PsElement {
    css() {
        return `
            :host { display: flex; flex-direction: column; flex: 1; min-width: 0; margin: 0 2px 0 1px; }
            .tabs { display: flex; height: 19px; background: #3a3a3a; border-left: 1px solid #2b2b2b; }
            .tab { width: 340px; padding-left: 10px; overflow: hidden; white-space: nowrap; background: #535353; font-size: 11px; font-weight: 600; line-height: 20px; color: #e4e4e4; }
            .view { display: flex; flex: 1; min-height: 0; }
            .canvas { flex: 1; min-width: 0; display: flex; align-items: center; justify-content: center; overflow: hidden; background: #282828; }
            .art { flex: none; width: 800px; height: 600px; padding: 242px 31px 0 0; background: #fff; box-shadow: 0 0 5px #111; color: #fb0f0f; -webkit-text-stroke: 1px #fb0f0f; font: 49px/60px "DejaVu Sans", sans-serif; text-align: right; white-space: nowrap; }
            .vbar { width: 16px; background: linear-gradient(90deg, #3a3a3a, #454545); }
            footer { display: flex; align-items: center; height: 17px; background: linear-gradient(#3a3a3a, #454545); color: #f0f0f0; }
            .zoom { width: 48px; text-align: center; align-self: stretch; line-height: 16px; background: #363636; }
            .doc { display: flex; align-items: center; align-self: stretch; width: 203px; background: #505050; }
            .doc ps-icon { --icon: 14px; margin: 0 0 0 4px; color: #bbb; }
            .doc span { flex: 1; padding-left: 46px; }
            .doc svg { width: 7px; height: 9px; margin-right: 3px; fill: #fff; }
            .corner { width: 16px; align-self: stretch; margin-left: auto; background: #555; }
        `;
    }
    html() {
        return `
            <div class="tabs"><div class="tab">Untitled-1 @ 100% (ก</div></div>
            <div class="view">
                <div class="canvas"><div class="art">ด้วย Layer Style</div></div>
                <div class="vbar"></div>
            </div>
            <footer>
                <div class="zoom">100%</div>
                <div class="doc">
                    <ps-icon name="share"></ps-icon>
                    <span>Doc: 1.37M/278.1K</span>
                    <svg viewBox="0 0 7 9"><path d="M0 0l7 4.500L0 9z"/></svg>
                </div>
                <div class="corner"></div>
            </footer>
        `;
    }
}
customElements.define('ps-document', PsDocument);

/* ---------- Right dock ---------- */

class PsPanel extends PsElement {
    connectedCallback() { this.render(); }
    css() {
        return `
            :host { display: flex; flex-direction: column; background: #535353; }
            .tabs { display: flex; align-items: stretch; height: 18px; background: #3a3a3a; font-weight: 600; border-bottom: 1px solid #2f2f2f; color: #999; }
            .tabs button { padding: 0 7px; border-right: 1px solid #2b2b2b; line-height: 16px; }
            .tabs button:first-child { height: 18px; background: #535353; color: #f2f2f2; }
            .tabs svg { width: 14px; height: 9px; margin: 4px 4px 0 auto; fill: #bbb; }
        `;
    }
    html() {
        const tabs = (this.getAttribute('tabs') || '').split(',');
        return `
            <div class="tabs">
                ${tabs.map((t) => `<button type="button">${t}</button>`).join('')}
                <svg viewBox="0 0 14 9"><path d="M0 3h5L2.500 6zM6 0h8v1H6zM6 2h8v1H6zM6 4h8v1H6zM6 6h8v1H6zM6 8h8v1H6z"/></svg>
            </div>
            <slot></slot>
        `;
    }
}
customElements.define('ps-panel', PsPanel);

class PsColor extends PsElement {
    css() {
        return `
            :host { display: flex; padding: 6px 15px 5px 9px; }
            .swatch { display: grid; grid-template: repeat(3, 10px) / repeat(3, 10px); width: 30px; margin: 2px 5px 0 0; }
            .fg { grid-area: 1 / 1 / 3 / 3; z-index: 1; background: #fff; border: 1px solid #222; outline: 1px solid #999; }
            .bg { grid-area: 2 / 2 / 4 / 4; background: #000; border: 1px solid #fff; }
            .field { flex: 1; height: 242px; overflow: hidden; background: linear-gradient(transparent, #000), linear-gradient(90deg, #fff, #f00); border: 1px solid #333; border-bottom-color: #777; }
            .field::before { content: ""; display: block; width: 12px; height: 12px; margin: -6px; border: 1px solid #333; border-radius: 50%; }
            .knob { align-self: flex-end; width: 6px; height: 8px; margin: 0 3px 0 6px; fill: #eee; }
            .hue { width: 21px; height: 242px; border: 1px solid #333; background: linear-gradient(#f00, #f0f 17%, #00f 33%, #0ff 50%, #0f0 67%, #ff0 83%, #f00); }
        `;
    }
    html() {
        return `
            <div class="swatch"><i class="fg"></i><i class="bg"></i></div>
            <div class="field"></div>
            <svg class="knob" viewBox="0 0 6 8"><path d="M0 0h2l4 4-4 4H0z"/></svg>
            <div class="hue"></div>
        `;
    }
}
customElements.define('ps-color', PsColor);

class PsAdjustments extends PsElement {
    css() {
        return `
            :host { display: flex; flex-direction: column; padding: 3px 44px 4px 9px; }
            h2 { margin: 0; font-size: 11px; line-height: 15px; font-weight: 700; color: #fff; white-space: nowrap; }
            div { display: flex; justify-content: center; gap: 4px; height: 27px; align-items: center; color: #d2d2d2; }
        `;
    }
    html() {
        const row = (list) => `<div>${list.map((n) => `<ps-icon name="${n}"></ps-icon>`).join('')}</div>`;
        return `
            <h2>Add an adjustment</h2>
            ${row(['bright', 'levels', 'curves', 'exposure', 'vibrance'])}
            ${row(['hue', 'balance', 'bw', 'photo', 'mixer', 'lookup'])}
            ${row(['invert', 'poster', 'thresh', 'selective', 'gradmap'])}
        `;
    }
}
customElements.define('ps-adjustments', PsAdjustments);

class PsLayer extends PsElement {
    css() {
        return `
            :host { display: flex; position: relative; height: 33px; background: #535353; border-bottom: 1px solid #3a3a3a; color: #fff; white-space: nowrap; }
            :host([selected]) { height: 41px; }
            :host([selected]) .body { background: #6b7c93; }
            .eye { display: flex; align-items: center; justify-content: center; width: 31px; border-right: 1px solid #3a3a3a; color: #ccc; --icon: 14px; }
            .body { display: flex; align-items: center; flex: 1; gap: 8px; padding: 0 15px 0 1px; }
            .name { flex: 1; }
        `;
    }
    html() {
        return `
            <div class="eye"><ps-icon name="eye"></ps-icon></div>
            <div class="body"><slot name="thumb"></slot><span class="name"><slot></slot></span><slot name="badge"></slot></div>
            <slot name="over"></slot>
        `;
    }
}
customElements.define('ps-layer', PsLayer);

class PsLayers extends PsElement {
    css() {
        return `
            :host { display: flex; flex-direction: column; flex: 1; color: #f2f2f2; }
            .row { display: flex; align-items: center; height: 28px; padding: 0 4px; border-bottom: 1px solid #3a3a3a; box-shadow: 0 1px 0 #5f5f5f; --icon: 16px; color: #d2d2d2; }
            .kind { width: 90px; --indent: 20px; margin-right: 10px; }
            .filters { display: flex; flex: 1; gap: 8px; }
            .toggle { width: 9px; height: 16px; background: linear-gradient(#999 50%, #333 50%); border: 1px solid #333; }
            .blend { flex: 1; }
            label { display: flex; align-items: center; gap: 5px; margin-left: 7px; color: #f2f2f2; }
            .value { display: flex; height: 18px; border: 1px solid #2c2c2c; }
            .value input { width: 34px; padding-left: 4px; background: #3a3a3a; }
            .value button { width: 18px; background: linear-gradient(#707070, #606060); border-left: 1px solid #2c2c2c; display: flex; align-items: center; justify-content: center; }
            .value svg { width: 6px; height: 3px; fill: #eee; }
            .locks { display: flex; flex: 1; align-items: center; gap: 6px; padding-left: 8px; }
            .dim { color: #999; }
            .list { flex: 1; background: #464646; padding-right: 15px; }
            .text-thumb { width: 36px; height: 36px; display: flex; align-items: center; justify-content: center; color: #e6e6e6; --icon: 22px;
                background: linear-gradient(#fff, #fff) 0 0 / 11px 1px, linear-gradient(#fff, #fff) 100% 0 / 11px 1px, linear-gradient(#fff, #fff) 0 100% / 11px 1px, linear-gradient(#fff, #fff) 100% 100% / 11px 1px,
                    linear-gradient(#fff, #fff) 0 0 / 1px 11px, linear-gradient(#fff, #fff) 100% 0 / 1px 11px, linear-gradient(#fff, #fff) 0 100% / 1px 11px, linear-gradient(#fff, #fff) 100% 100% / 1px 11px; background-repeat: no-repeat; }
            .thumb { width: 32px; height: 28px; margin: 0 2px; background: #fff; border: 1px solid #000; }
            .lock { --icon: 14px; color: #ccc; }
            ps-callout { inset: -6px -10px -6px -12px; }
            footer { display: flex; justify-content: flex-end; align-items: center; gap: 11px; height: 20px; padding-right: 26px; border-top: 1px solid #2b2b2b; box-shadow: inset 0 1px 0 #666; color: #d2d2d2; --icon: 16px; }
            .fx { font: italic bold 14px/14px "Liberation Serif", serif; }
        `;
    }
    html() {
        const value = (label) => `
            <label>${label}:
                <span class="value"><input type="text" value="100%"><button type="button" aria-label="${label} slider"><svg viewBox="0 0 6 3"><path d="M0 0h6L3 3z"/></svg></button></span>
            </label>`;
        const icons = (list) => list.map((n) => `<ps-icon name="${n}"></ps-icon>`).join('');
        return `
            <div class="row">
                <ps-select class="kind" label="Filter type" icon="search" value="Kind"></ps-select>
                <div class="filters">${icons(['image', 'adjust', 'type', 'bounds', 'smart'])}</div>
                <span class="toggle"></span>
            </div>
            <div class="row">
                <ps-select class="blend" label="Blend mode" value="Normal"></ps-select>
                ${value('Opacity')}
            </div>
            <div class="row">
                Lock:
                <div class="locks"><ps-icon class="dim" name="checker"></ps-icon><ps-icon class="dim" name="brush"></ps-icon>${icons(['cross', 'lock'])}</div>
                ${value('Fill')}
            </div>
            <div class="list">
                <ps-layer selected>
                    <div slot="thumb" class="text-thumb"><ps-icon name="type"></ps-icon></div>
                    การใส่ Effect ด้วย Layer Style
                    <ps-callout slot="over"></ps-callout>
                </ps-layer>
                <ps-layer>
                    <div slot="thumb" class="thumb"></div>
                    <em>Background</em>
                    <ps-icon slot="badge" class="lock" name="lockOutline"></ps-icon>
                </ps-layer>
            </div>
            <footer><ps-icon class="dim" name="link"></ps-icon><span class="fx">fx.</span>${icons(['layerMask', 'adjustMore', 'folder', 'page', 'trash'])}</footer>
        `;
    }
}
customElements.define('ps-layers', PsLayers);

class PsDock extends PsElement {
    css() {
        return `
            :host { display: grid; grid-template: 12px 1fr / 38px 240px; column-gap: 2px; flex: none; padding: 0 1px; background: #2b2b2b; }
            header { display: flex; align-items: center; justify-content: flex-end; padding-right: 5px; background: #383838; }
            header svg { width: 8px; height: 6px; fill: #ccc; }
            .strip { display: flex; flex-direction: column; background: #535353; color: #d2d2d2; }
            .strip div { display: flex; flex-direction: column; align-items: center; gap: 9px; padding: 4px 0 6px; border-bottom: 1px solid #2b2b2b; box-shadow: 0 1px 0 #666; }
            .strip div::before { content: ""; width: 20px; height: 4px; margin-bottom: -4px; background: repeating-linear-gradient(90deg, #333 0 1px, #535353 1px 2px); }
            .panels { display: flex; flex-direction: column; gap: 3px; }
            .grow { flex: 1; }
        `;
    }
    html() {
        return `
            <header><svg viewBox="0 0 8 6"><path d="M4 0v6L0 3zM8 0v6L4 3z"/></svg></header>
            <header><svg viewBox="0 0 8 6"><path d="M0 0l4 3-4 3zM4 0l4 3-4 3z"/></svg></header>
            <div class="strip">
                <div><ps-icon name="actions"></ps-icon></div>
                <div><ps-icon name="props"></ps-icon><ps-icon name="info"></ps-icon></div>
                <div><ps-icon name="char"></ps-icon><ps-icon name="para"></ps-icon></div>
            </div>
            <div class="panels">
                <ps-panel tabs="Color,Swatches"><ps-color></ps-color></ps-panel>
                <ps-panel tabs="Adjustments,Styles"><ps-adjustments></ps-adjustments></ps-panel>
                <ps-panel class="grow" tabs="Layers,Channels,Paths"><ps-layers></ps-layers></ps-panel>
            </div>
        `;
    }
}
customElements.define('ps-dock', PsDock);

/* ---------- Desktop ---------- */

class PsTaskbar extends PsElement {
    css() {
        return `
            :host { display: flex; align-items: stretch; height: 30px; color: #fff; font-size: 12px;
                background: linear-gradient(25deg, transparent 88%, #b9851f 89%, #c49632 92%), linear-gradient(90deg, #c48a2c, #b8822b 25%, #b27a2a 48%, #b98a3c 55%, #b99e6c 70%, #bfa577 86%, #bfa577); }
            .apps { display: flex; gap: 4px; flex: 1; }
            button { display: flex; align-items: center; justify-content: center; width: 42px; }
            button:first-child { width: 38px; }
            .run { background: rgba(255, 255, 255, .2); border: 1px solid rgba(255, 255, 255, .4); }
            .active { background: rgba(255, 255, 255, .5); border: 1px solid #fff; }
            .ps { width: 16px; height: 16px; border: 1px solid #35b5e8; background: #101828; color: #35c5f5; font: bold 9px/14px "Open Sans", sans-serif; text-align: center; }
            .tray { display: flex; align-items: center; gap: 8px; padding-right: 26px; --icon: 16px; }
            .up { width: 8px; height: 5px; margin-right: 4px; fill: #fff; stroke: #776; stroke-width: .5; }
            .lang { margin-left: 6px; }
            time { padding-left: 17px; }
        `;
    }
    html() {
        const app = (name, cls = '') => `<button type="button" class="${cls}" aria-label="${name}"><ps-icon name="${name}"></ps-icon></button>`;
        return `
            <div class="apps">
                ${app('windows')}${app('ie')}${app('explorer', 'run')}${app('store')}${app('chrome', 'run')}${app('word', 'run')}
                <button type="button" class="active"><span class="ps">Ps</span></button>
            </div>
            <div class="tray">
                <svg class="up" viewBox="0 0 8 5"><path d="M4 0l4 5H0z"/></svg>
                <ps-icon name="flag"></ps-icon><ps-icon name="battery"></ps-icon><ps-icon name="signal"></ps-icon><ps-icon name="speaker"></ps-icon>
                <span class="lang">ENG</span><time>21:13</time>
            </div>
        `;
    }
}
customElements.define('ps-taskbar', PsTaskbar);

class PsDesktop extends PsElement {
    css() {
        return `
            :host { display: flex; flex-direction: column; min-height: 100vh; }
            .work { display: flex; flex: 1; }
        `;
    }
    html() {
        return `
            <slot name="menubar"></slot>
            <slot name="options"></slot>
            <div class="work"><slot name="work"></slot></div>
            <slot name="taskbar"></slot>
        `;
    }
}
customElements.define('ps-desktop', PsDesktop);
</script>
</body>
</html>
